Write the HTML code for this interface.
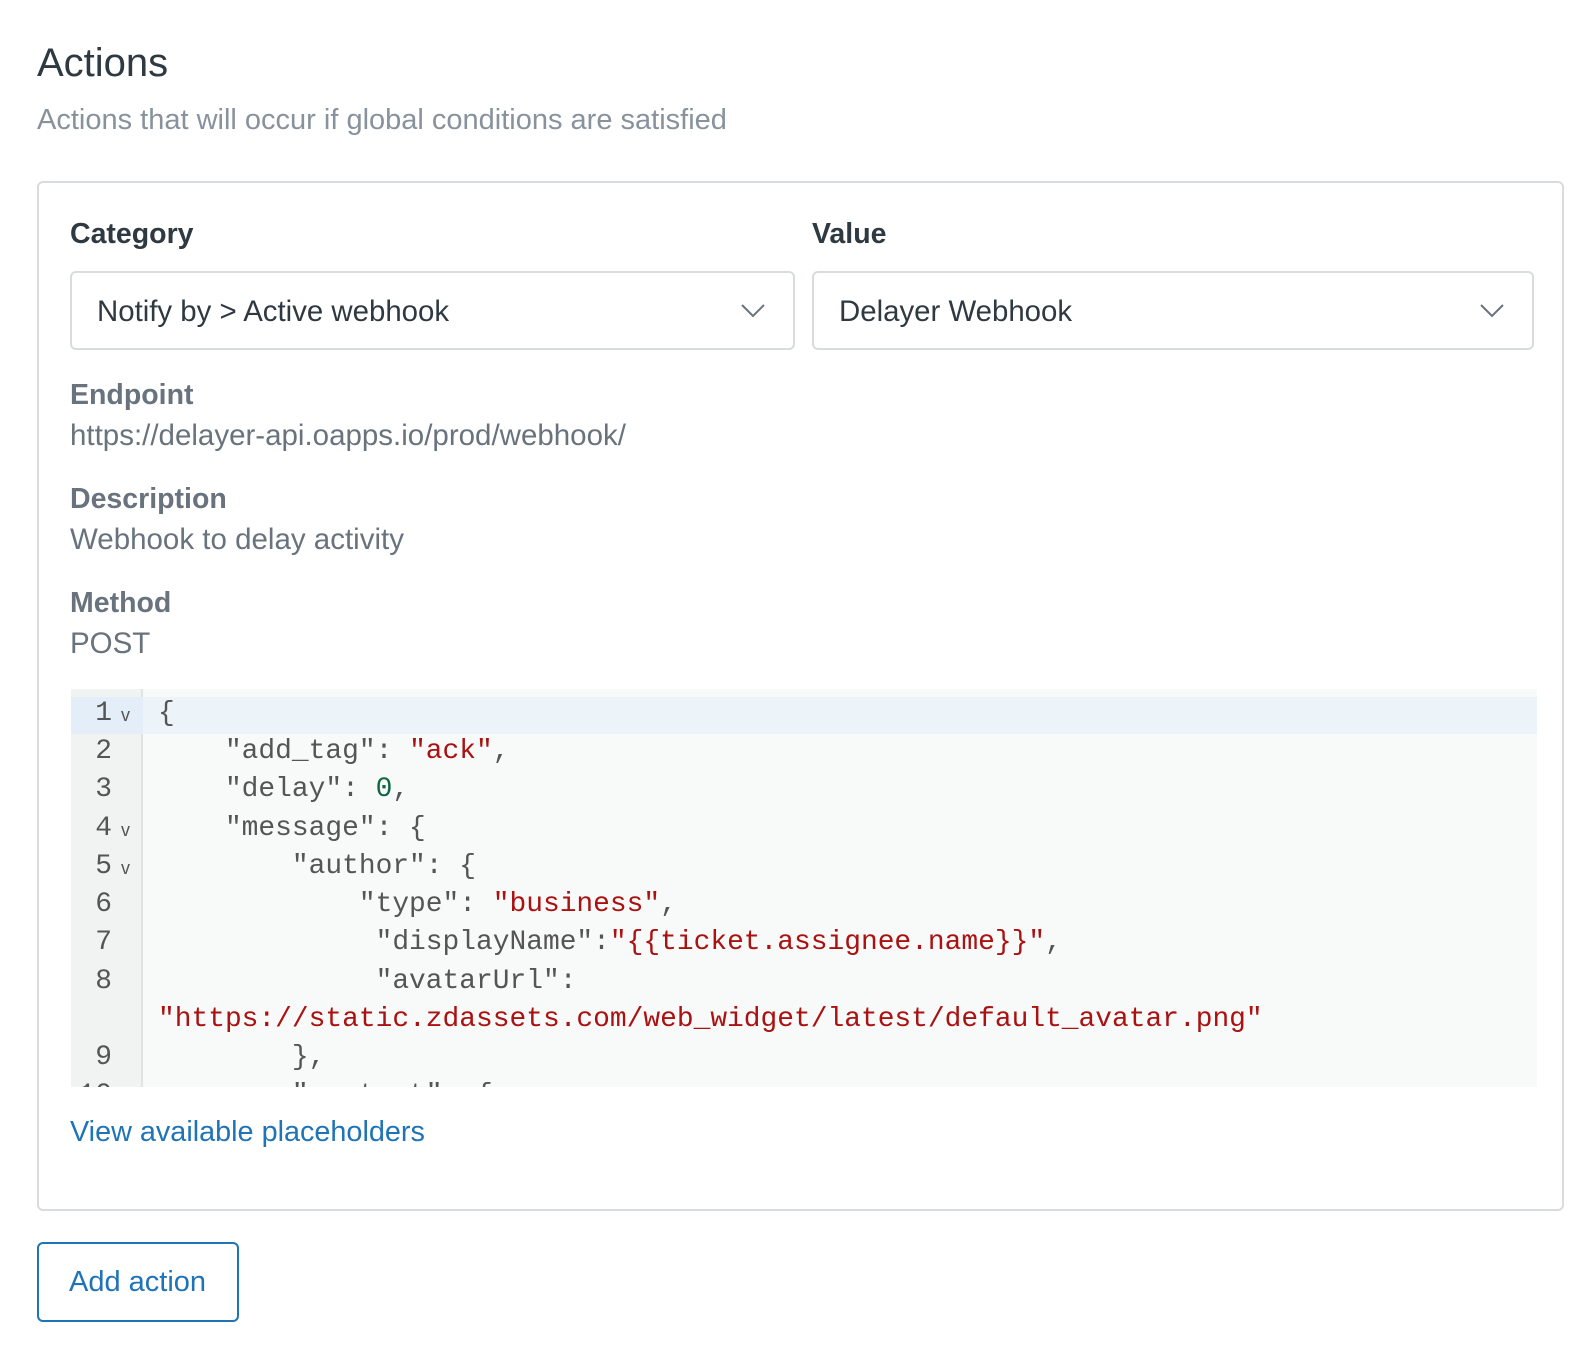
<!DOCTYPE html>
<html><head><meta charset="utf-8"><style>
*{box-sizing:border-box;margin:0;padding:0}
body{width:1596px;height:1348px;background:#fff;font-family:"Liberation Sans",sans-serif;color:#2f3941;position:relative;overflow:hidden}
.abs{position:absolute;white-space:nowrap}
h1{position:absolute;left:37px;top:41px;font-size:40px;font-weight:400;color:#2f3941}
.sub{left:37px;top:104px;font-size:29px;color:#87929d}
.card{position:absolute;left:37px;top:181px;width:1527px;height:1030px;border:2px solid #d8dcde;border-radius:6px}
.lbl{font-size:28.5px;font-weight:700;color:#2f3941}
.sel{position:absolute;top:271px;height:79px;border:2px solid #d8dcde;border-radius:6px;font-size:29.4px;padding:22px 0 0 25px;color:#2f3941;white-space:nowrap}
.sel svg{position:absolute;right:28px;top:31px}
.gl{font-size:28.5px;font-weight:700;color:#68737d}
.gv{font-size:29.5px;color:#68737d}
.code{position:absolute;left:71px;top:689px;width:1466px;height:398px;background:#f8f9f9;overflow:hidden;font-family:"Liberation Mono",monospace;font-size:27.9px}
.gut{position:absolute;left:0;top:0;width:72px;height:100%;background:#f1f2f2;border-right:2px solid #e0e3e5}
.hl{position:absolute;left:0;top:8px;width:100%;height:37px;background:#edf4f9}
.hlg{position:absolute;left:0;top:8px;width:72px;height:37px;background:#e3eef8}
.ln{position:absolute;left:0;width:41px;text-align:right;color:#555;}
.fd{position:absolute;left:50px;font-family:"Liberation Sans",sans-serif;font-size:18px;color:#555}
.cl{position:absolute;left:87px;color:#555;white-space:pre}
.s{color:#a11}
.n{color:#164}
a{color:#1f73b7;text-decoration:none}
.btn{position:absolute;left:37px;top:1242px;width:202px;height:80px;border:2px solid #1f73b7;border-radius:6px;color:#1f73b7;font-size:29px;padding:22px 0 0 30px}
</style></head><body>
<h1>Actions</h1>
<div class="abs sub">Actions that will occur if global conditions are satisfied</div>
<div class="card"></div>
<div class="abs lbl" style="left:70px;top:218px">Category</div>
<div class="abs lbl" style="left:812px;top:218px">Value</div>
<div class="sel" style="left:70px;width:725px">Notify by &gt; Active webhook<svg width="24" height="14" viewBox="0 0 24 14"><path d="M1 1l11 11 11-11" fill="none" stroke="#68737d" stroke-width="2"/></svg></div>
<div class="sel" style="left:812px;width:722px">Delayer Webhook<svg width="24" height="14" viewBox="0 0 24 14"><path d="M1 1l11 11 11-11" fill="none" stroke="#68737d" stroke-width="2"/></svg></div>
<div class="abs gl" style="left:70px;top:379px">Endpoint</div>
<div class="abs gv" style="left:70px;top:419px">https://delayer-api.oapps.io/prod/webhook/</div>
<div class="abs gl" style="left:70px;top:483px">Description</div>
<div class="abs gv" style="left:70px;top:523px">Webhook to delay activity</div>
<div class="abs gl" style="left:70px;top:587px">Method</div>
<div class="abs gv" style="left:70px;top:627px">POST</div>
<div class="code">
<div class="gut"></div><div class="hl"></div><div class="hlg"></div>
<div class="ln" style="top:9px">1</div><div class="fd" style="top:16px">v</div>
<div class="ln" style="top:47px">2</div>
<div class="ln" style="top:85px">3</div>
<div class="ln" style="top:124px">4</div><div class="fd" style="top:131px">v</div>
<div class="ln" style="top:162px">5</div><div class="fd" style="top:169px">v</div>
<div class="ln" style="top:200px">6</div>
<div class="ln" style="top:238px">7</div>
<div class="ln" style="top:277px">8</div>
<div class="ln" style="top:353px">9</div>
<div class="ln" style="top:391px">10</div>
<div class="cl" style="top:9px">{</div>
<div class="cl" style="top:47px">    "add_tag": <span class="s">"ack"</span>,</div>
<div class="cl" style="top:85px">    "delay": <span class="n">0</span>,</div>
<div class="cl" style="top:124px">    "message": {</div>
<div class="cl" style="top:162px">        "author": {</div>
<div class="cl" style="top:200px">            "type": <span class="s">"business"</span>,</div>
<div class="cl" style="top:238px">             "displayName":<span class="s">"{{ticket.assignee.name}}"</span>,</div>
<div class="cl" style="top:277px">             "avatarUrl":</div>
<div class="cl s" style="top:315px">"https://static.zdassets.com/web_widget/latest/default_avatar.png"</div>
<div class="cl" style="top:353px">        },</div>
<div class="cl" style="top:391px">        "content": {</div>
</div>
<div class="abs" style="left:70px;top:1116px;font-size:28.8px"><a>View available placeholders</a></div>
<div class="btn">Add action</div>
</body></html>
